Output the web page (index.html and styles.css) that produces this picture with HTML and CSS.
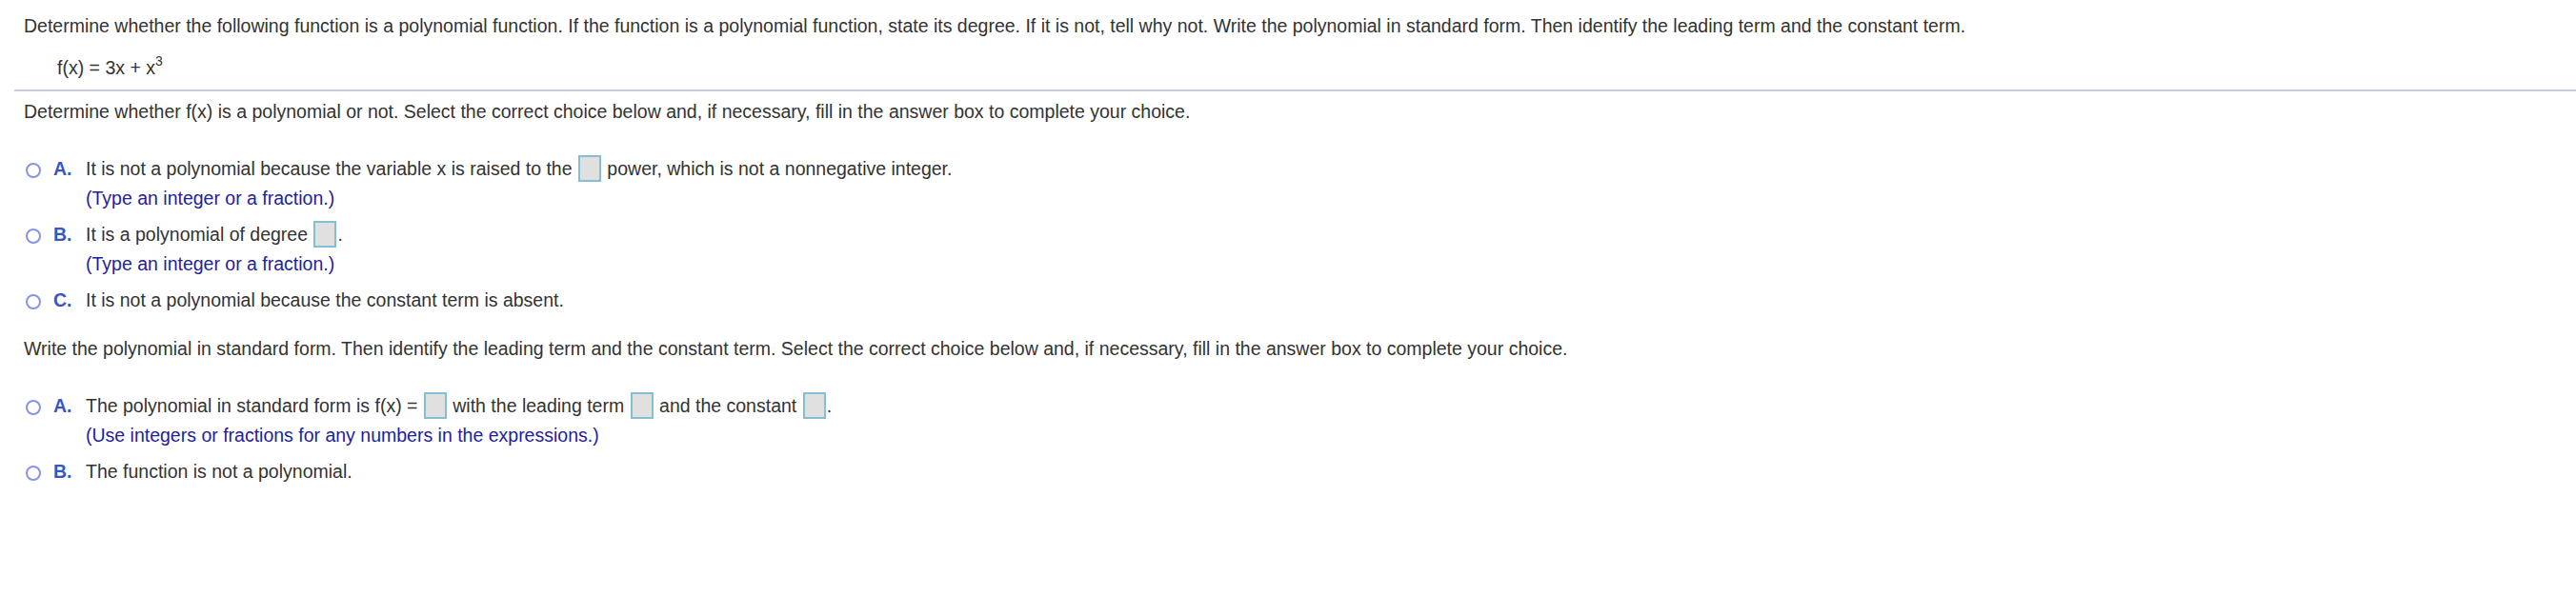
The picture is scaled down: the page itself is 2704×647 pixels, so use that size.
FILE: index.html
```html
<!DOCTYPE html>
<html lang="en">
<head>
    <meta charset="UTF-8">
    <title>Polynomial Function</title>
    <link rel="stylesheet" href="styles.css">
</head>
<body>
    <div class="question">
        <p class="intro">Determine whether the following function is a polynomial function. If the function is a polynomial function, state its degree. If it is not, tell why not. Write the polynomial in standard form. Then identify the leading term and the constant term.</p>
        <p class="formula">f(x) = 3x + x<sup>3</sup></p>
    </div>

    <div class="parts">
        <p class="prompt">Determine whether f(x) is a polynomial or not. Select the correct choice below and, if necessary, fill in the answer box to complete your choice.</p>

        <div class="choices">
            <div class="choice">
                <span class="radio"></span>
                <span class="letter">A.</span>
                <div class="body">
                    <div class="line">It is not a polynomial because the variable x is raised to the <span class="box"></span> power, which is not a nonnegative integer.</div>
                    <div class="hint">(Type an integer or a fraction.)</div>
                </div>
            </div>
            <div class="choice">
                <span class="radio"></span>
                <span class="letter">B.</span>
                <div class="body">
                    <div class="line">It is a polynomial of degree <span class="box"></span>.</div>
                    <div class="hint">(Type an integer or a fraction.)</div>
                </div>
            </div>
            <div class="choice">
                <span class="radio"></span>
                <span class="letter">C.</span>
                <div class="body">
                    <div class="line">It is not a polynomial because the constant term is absent.</div>
                </div>
            </div>
        </div>

        <p class="prompt second">Write the polynomial in standard form. Then identify the leading term and the constant term. Select the correct choice below and, if necessary, fill in the answer box to complete your choice.</p>

        <div class="choices">
            <div class="choice">
                <span class="radio"></span>
                <span class="letter">A.</span>
                <div class="body">
                    <div class="line">The polynomial in standard form is f(x) = <span class="box"></span> with the leading term <span class="box"></span> and the constant <span class="box"></span>.</div>
                    <div class="hint">(Use integers or fractions for any numbers in the expressions.)</div>
                </div>
            </div>
            <div class="choice">
                <span class="radio"></span>
                <span class="letter">B.</span>
                <div class="body">
                    <div class="line">The function is not a polynomial.</div>
                </div>
            </div>
        </div>
    </div>
</body>
</html>
```

FILE: styles.css
```css
body {
    font-family: "Liberation Sans", Arial, sans-serif;
    font-size: 19.5px;
    color: #333;
    background-color: #fff;
    margin: 0;
    padding: 0;
}
p {
    margin: 0;
}
.question {
    padding: 14px 0 0 25px;
}
.intro {
    line-height: 26px;
}
.formula {
    margin: 18px 0 0 35px;
    line-height: 26px;
    padding-bottom: 8px;
}
.formula sup {
    font-size: 14px;
    vertical-align: 0;
    position: relative;
    top: -9px;
}
.parts {
    margin-left: 15px;
    border-top: 2px solid #cbcfdb;
}
.prompt {
    padding: 8px 0 0 10px;
    line-height: 26px;
}
.prompt.second {
    padding-top: 11px;
}
.choices {
    margin-top: 34px;
    padding-left: 12px;
}
.choice {
    display: flex;
    align-items: flex-start;
    margin-bottom: 12px;
}
.radio {
    width: 12px;
    height: 12px;
    border: 2px solid #8794e2;
    border-radius: 50%;
    margin-top: 7px;
    flex: none;
}
.letter {
    width: 34px;
    margin-left: 13px;
    font-weight: bold;
    color: #3a55c6;
    line-height: 26px;
    flex: none;
}
.line {
    line-height: 30px;
    margin-top: -2px;
}
.hint {
    color: #1e22a0;
    line-height: 26px;
    margin-top: 3px;
}
.box {
    display: inline-block;
    width: 20px;
    height: 24px;
    border: 2px solid #84c0d0;
    background-color: #e0e0e0;
    vertical-align: middle;
    margin: -4px 1px 0;
}
```
